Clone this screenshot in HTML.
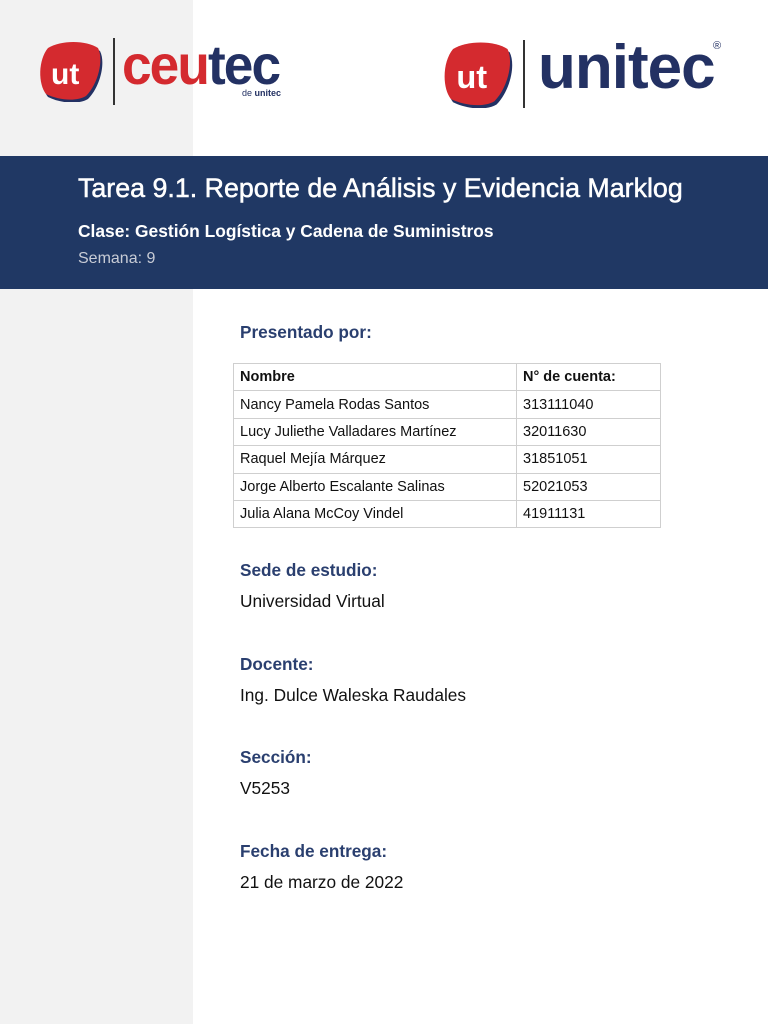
<!DOCTYPE html>
<html><head><meta charset="utf-8"><style>
*{margin:0;padding:0;box-sizing:border-box}
body{width:768px;height:1024px;background:#fff;position:relative;overflow:hidden;font-family:"Liberation Sans",Arial,sans-serif}
.side{position:absolute;left:0;top:0;width:193px;height:1024px;background:#f2f2f2}
.band{position:absolute;left:0;top:156px;width:768px;height:133px;background:#203864}
.a{position:absolute;white-space:nowrap}
h3{position:absolute;color:#2a3f6f;font-size:17.2px;font-weight:bold}
.v{position:absolute;font-size:17.3px;color:#111}
table{position:absolute;left:233px;top:363px;width:428px;border-collapse:collapse;font-size:14.5px;color:#111}
td{border:1px solid #cfcfcf;height:27.4px;padding:0 6px;vertical-align:middle}
td:first-child{width:283px}
</style></head><body>
<div class="side"></div>
<svg class="a" style="left:36px;top:40px" width="68" height="62" viewBox="0 0 68 62"><path d="M12 8 C25 0 50 0 62 8 C68 20 62 44 50 56 C40 62 22 60 10 54 C2 44 2 20 12 8Z" fill="#233163" transform="translate(2,3)"/><path d="M12 8 C25 0 50 0 62 8 C68 20 62 44 50 56 C40 62 22 60 10 54 C2 44 2 20 12 8Z" fill="#d42a2f"/><text x="15" y="44" font-family="Liberation Sans" font-weight="bold" font-size="30" fill="#fff">ut</text></svg>
<div class="a" style="left:113px;top:38px;width:2px;height:67px;background:#333"></div>
<div class="a" style="left:122px;top:32px;font-size:56px;font-weight:bold;letter-spacing:-2px;color:#d42a2f;transform:scaleX(0.95);transform-origin:0 0">ceu<span style="color:#233163">tec</span></div>
<div class="a" style="left:242px;top:88px;font-size:9px;color:#233163">de <b>unitec</b></div>
<svg class="a" style="left:440px;top:40px" width="74" height="68" viewBox="0 0 68 62"><path d="M12 8 C25 0 50 0 62 8 C68 20 62 44 50 56 C40 62 22 60 10 54 C2 44 2 20 12 8Z" fill="#233163" transform="translate(2,3)"/><path d="M12 8 C25 0 50 0 62 8 C68 20 62 44 50 56 C40 62 22 60 10 54 C2 44 2 20 12 8Z" fill="#d42a2f"/><text x="15" y="44" font-family="Liberation Sans" font-weight="bold" font-size="30" fill="#fff">ut</text></svg>
<div class="a" style="left:523px;top:40px;width:2px;height:68px;background:#333"></div>
<div class="a" style="left:538px;top:32px;font-size:62px;font-weight:bold;letter-spacing:-1px;color:#233163">unitec</div>
<div class="a" style="left:713px;top:40px;font-size:11px;color:#233163">®</div>
<div class="band"></div>
<div class="a" style="left:78px;top:173px;font-size:26.8px;color:#fff;-webkit-text-stroke:0.5px #fff">Tarea 9.1. Reporte de Análisis y Evidencia Marklog</div>
<div class="a" style="left:78px;top:221px;font-size:17.4px;font-weight:bold;color:#fff">Clase: Gestión Logística y Cadena de Suministros</div>
<div class="a" style="left:78px;top:250px;font-size:16px;color:#c8ccd6">Semana: 9</div>
<h3 style="left:240px;top:322px">Presentado por:</h3>
<table>
<tr><td><b>Nombre</b></td><td><b>N° de cuenta:</b></td></tr>
<tr><td>Nancy Pamela Rodas Santos</td><td>313111040</td></tr>
<tr><td>Lucy Juliethe Valladares Martínez</td><td>32011630</td></tr>
<tr><td>Raquel Mejía Márquez</td><td>31851051</td></tr>
<tr><td>Jorge Alberto Escalante Salinas</td><td>52021053</td></tr>
<tr><td>Julia Alana McCoy Vindel</td><td>41911131</td></tr>
</table>
<h3 style="left:240px;top:560px">Sede de estudio:</h3>
<div class="v" style="left:240px;top:591px">Universidad Virtual</div>
<h3 style="left:240px;top:654px">Docente:</h3>
<div class="v" style="left:240px;top:685px">Ing. Dulce Waleska Raudales</div>
<h3 style="left:240px;top:747px">Sección:</h3>
<div class="v" style="left:240px;top:778px">V5253</div>
<h3 style="left:240px;top:841px">Fecha de entrega:</h3>
<div class="v" style="left:240px;top:872px">21 de marzo de 2022</div>
</body></html>
